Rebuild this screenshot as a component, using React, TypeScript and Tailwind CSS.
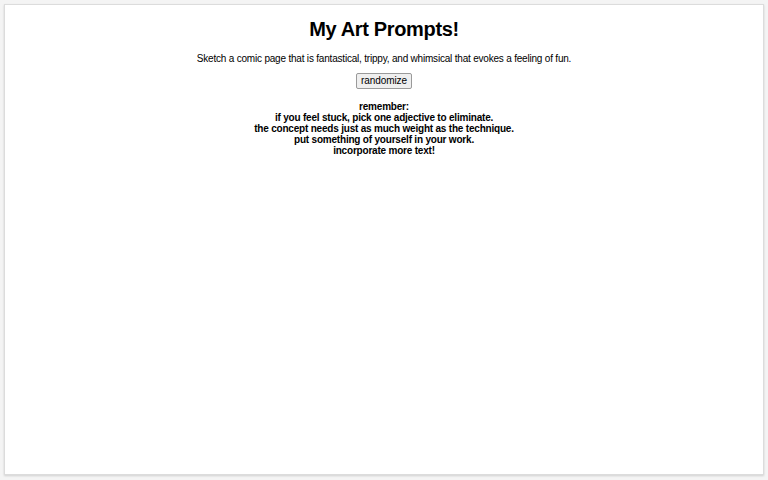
import React from "react";

export default function App() {
  return (
    <div className="min-h-[480px] w-[768px] bg-[#f4f4f4] p-[4px] [font-family:'Liberation_Sans',Arial,sans-serif] text-black">
      <div className="h-[471px] bg-white border border-[#dcdcdc] shadow-[0_1px_2px_rgba(0,0,0,0.15)] flex flex-col items-center">
        <h1 className="mt-[12px] text-[20px] leading-[24px] font-bold tracking-[-0.35px]">My Art Prompts!</h1>
        <p className="mt-[12px] text-[10px] leading-[12px] tracking-[-0.2px]">
          Sketch a comic page that is fantastical, trippy, and whimsical that evokes a feeling of fun.
        </p>
        <button className="mt-[8px] h-[16px] px-[4px] text-[10px] leading-[14px] tracking-[-0.1px] bg-[#efefef] border border-[#9a9a9a] rounded-[2px]">
          randomize
        </button>
        <div className="mt-[12px] text-[10px] leading-[11px] font-bold text-center tracking-[-0.2px]">
          <div>remember:</div>
          <div>if you feel stuck, pick one adjective to eliminate.</div>
          <div>the concept needs just as much weight as the technique.</div>
          <div>put something of yourself in your work.</div>
          <div>incorporate more text!</div>
        </div>
      </div>
    </div>
  );
}
